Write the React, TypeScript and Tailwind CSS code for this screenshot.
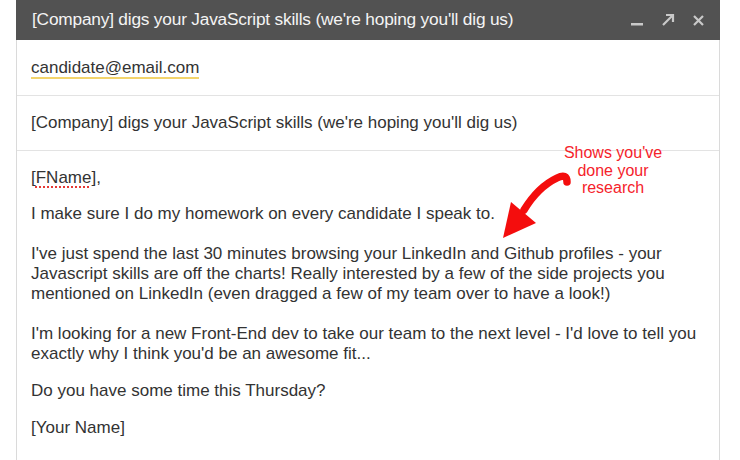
import React from "react";

const font = { fontFamily: '"Liberation Sans", Arial, sans-serif' };

export default function App() {
  return (
    <div className="relative w-[740px] h-[460px] overflow-hidden bg-white" style={font}>
      <div className="ml-[16px] w-[704px] h-[460px] border-x border-[#dadada] flex flex-col">
        <div className="h-[40px] shrink-0 bg-[#525252] flex items-center pl-[16px] pr-[15px] -mx-px">
          <span className="text-[#f4f4f4] text-[17.3px] tracking-[-0.2px] flex-1 whitespace-nowrap">
            [Company] digs your JavaScript skills (we're hoping you'll dig us)
          </span>
          <div className="flex items-center gap-[17px] text-[#c9c9c9]">
            <svg width="14" height="14" viewBox="0 0 14 14">
              <rect x="1" y="10" width="12" height="2.5" fill="#c9c9c9" />
            </svg>
            <svg width="14" height="14" viewBox="0 0 14 14">
              <path d="M2 12 L12 2 M5 2 H12 V9" stroke="#c9c9c9" strokeWidth="2.2" fill="none" />
            </svg>
            <svg width="13" height="13" viewBox="0 0 13 13">
              <path d="M2 2 L11 11 M11 2 L2 11" stroke="#c9c9c9" strokeWidth="2.2" fill="none" />
            </svg>
          </div>
        </div>
        <div className="h-[56px] shrink-0 flex items-center px-[14px] border-b border-[#e3e3e3]">
          <span className="text-[17px] text-[#333] border-b-2 border-[#f3d46c] leading-[19px] mt-[2px]">
            candidate@email.com
          </span>
        </div>
        <div className="h-[55px] shrink-0 flex items-center px-[14px] border-b border-[#e3e3e3]">
          <span className="text-[17px] text-[#333] whitespace-nowrap">
            [Company] digs your JavaScript skills (we're hoping you'll dig us)
          </span>
        </div>
        <div className="px-[14px] pt-[17px] text-[17px] leading-[20px] text-[#333] flex flex-col gap-[17px] whitespace-nowrap">
          <p>
            [
            <span className="underline decoration-dotted decoration-[#e53935] decoration-2 underline-offset-[3px]">
              FName
            </span>
            ],
          </p>
          <p className="-mt-px">I make sure I do my homework on every candidate I speak to.</p>
          <p className="mt-[3px]">
            I've just spend the last 30 minutes browsing your LinkedIn and Github profiles - your
            <br />
            Javascript skills are off the charts! Really interested by a few of the side projects you
            <br />
            mentioned on LinkedIn (even dragged a few of my team over to have a look!)
          </p>
          <p className="mt-[3px]">
            I'm looking for a new Front-End dev to take our team to the next level - I'd love to tell you
            <br />
            exactly why I think you'd be an awesome fit...
          </p>
          <p>Do you have some time this Thursday?</p>
          <p>[Your Name]</p>
        </div>
      </div>
      <div className="absolute left-[558px] top-[144px] w-[110px] text-center text-[16px] leading-[17.5px] text-[#f5232b] whitespace-nowrap">
        Shows you've
        <br />
        done your
        <br />
        research
      </div>
      <svg className="absolute left-0 top-0 pointer-events-none" width="740" height="460" viewBox="0 0 740 460">
        <path
          d="M567 182 Q567 173 557 178 Q538 187 524 210"
          stroke="#f40d0d"
          strokeWidth="7.5"
          strokeLinecap="round"
          fill="none"
        />
        <polygon points="503,238 511,202 536,223" fill="#f40d0d" />
      </svg>
    </div>
  );
}
